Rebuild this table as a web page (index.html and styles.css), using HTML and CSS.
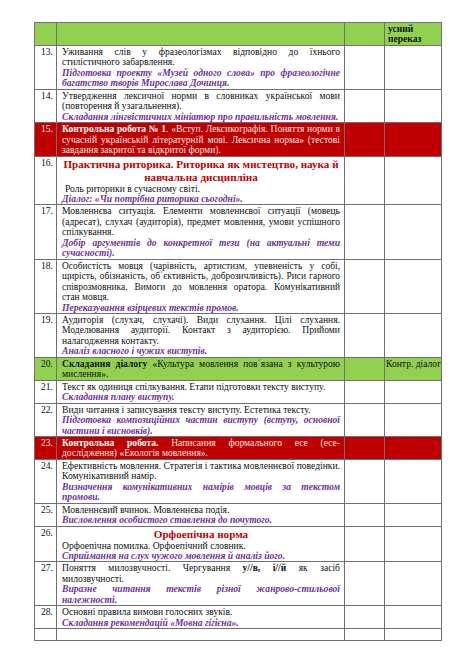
FILE: index.html
```html
<!DOCTYPE html>
<html lang="uk">
<head>
<meta charset="utf-8">
<title>Календарний план</title>
<link rel="stylesheet" href="styles.css">
</head>
<body>
<table class="plan">
  <colgroup>
    <col class="c-num">
    <col class="c-topic">
    <col class="c-hours">
    <col class="c-note">
  </colgroup>
  <tr class="row-green head">
    <td></td><td></td><td></td><td class="note bold">усний переказ</td>
  </tr>
  <tr>
    <td class="num">13.</td>
    <td class="topic"><p>Уживання слів у фразеологізмах відповідно до їхнього стилістичного забарвлення.</p><p class="task">Підготовка проекту «Музей одного слова» про фразеологічне багатство творів Мирослава Дочинця.</p></td>
    <td></td><td></td>
  </tr>
  <tr>
    <td class="num">14.</td>
    <td class="topic"><p>Утвердження лексичної норми в словниках української мови (повторення й узагальнення).</p><p class="task">Складання лінгвістичних мініатюр про правильність мовлення.</p></td>
    <td></td><td></td>
  </tr>
  <tr class="row-red">
    <td class="num">15.</td>
    <td class="topic"><p><b>Контрольна робота № 1</b>. «Вступ. Лексикографія. Поняття норми в сучасній українській літературній мові. Лексична норма» (тестові завдання закритої та відкритої форми).</p></td>
    <td></td><td></td>
  </tr>
  <tr>
    <td class="num">16.</td>
    <td class="topic"><p class="heading">Практична риторика. Риторика як мистецтво, наука й навчальна дисципліна</p><p class="indent">Роль риторики в сучасному світі.</p><p class="task">Діалог: «Чи потрібна риторика сьогодні».</p></td>
    <td></td><td></td>
  </tr>
  <tr>
    <td class="num">17.</td>
    <td class="topic"><p>Мовленнєва ситуація. Елементи мовленнєвої ситуації (мовець (адресат), слухач (аудиторія), предмет мовлення, умови успішного спілкування.</p><p class="task">Добір аргументів до конкретної тези (на актуальні теми сучасності).</p></td>
    <td></td><td></td>
  </tr>
  <tr>
    <td class="num">18.</td>
    <td class="topic"><p class="dense">Особистість мовця (чарівність, артистизм, упевненість у собі, щирість, обізнаність, об΄єктивність, доброзичливість). Риси гарного співрозмовника. Вимоги до мовлення оратора. Комунікативний стан&nbsp;мовця.</p><p class="task">Переказування взірцевих текстів промов.</p></td>
    <td></td><td></td>
  </tr>
  <tr>
    <td class="num">19.</td>
    <td class="topic"><p>Аудиторія (слухач, слухачі). Види слухання. Цілі слухання. Моделювання аудиторії. Контакт з аудиторією. Прийоми налагодження контакту.</p><p class="task">Аналіз власного і чужих виступів.</p></td>
    <td></td><td></td>
  </tr>
  <tr class="row-green">
    <td class="num">20.</td>
    <td class="topic"><p><b>Складання діалогу</b> «Культура мовлення пов΄язана з культурою мислення».</p></td>
    <td></td><td class="note tight">Контр. діалог</td>
  </tr>
  <tr>
    <td class="num">21.</td>
    <td class="topic"><p>Текст як одиниця спілкування. Етапи підготовки тексту виступу.</p><p class="task">Складання плану виступу.</p></td>
    <td></td><td></td>
  </tr>
  <tr>
    <td class="num">22.</td>
    <td class="topic"><p>Види читання і записування тексту виступу. Естетика тексту.</p><p class="task">Підготовка композиційних частин виступу (вступу, основної частини і висновків).</p></td>
    <td></td><td></td>
  </tr>
  <tr class="row-red">
    <td class="num">23.</td>
    <td class="topic"><p><b>Контрольна робота.</b> Написання формального есе (есе-дослідження) «Екологія мовлення».</p></td>
    <td></td><td></td>
  </tr>
  <tr>
    <td class="num">24.</td>
    <td class="topic"><p>Ефективність мовлення. Стратегія і тактика мовленнєвої поведінки. Комунікативний намір.</p><p class="task">Визначення комунікативних намірів мовців за текстом промови.</p></td>
    <td></td><td></td>
  </tr>
  <tr>
    <td class="num">25.</td>
    <td class="topic"><p>Мовленнєвий вчинок. Мовленнєва подія.</p><p class="task">Висловлення особистого ставлення до почутого.</p></td>
    <td></td><td></td>
  </tr>
  <tr>
    <td class="num">26.</td>
    <td class="topic"><p class="heading">Орфоепічна норма</p><p>Орфоепічна помилка. Орфоепічний словник.</p><p class="task">Сприймання на слух чужого мовлення й аналіз його.</p></td>
    <td></td><td></td>
  </tr>
  <tr>
    <td class="num">27.</td>
    <td class="topic"><p>Поняття милозвучності. Чергування <b>у//в, і//й</b> як засіб милозвучності.</p><p class="task">Виразне читання текстів різної жанрово-стильової належності.</p></td>
    <td></td><td></td>
  </tr>
  <tr>
    <td class="num">28.</td>
    <td class="topic"><p>Основні правила вимови голосних звуків.</p><p class="task">Складання рекомендацій «Мовна гігієна».</p></td>
    <td></td><td></td>
  </tr>
  <tr class="empty">
    <td></td><td></td><td></td><td></td>
  </tr>
</table>
</body>
</html>
```
FILE: styles.css
```css
html, body {
  margin: 0;
  padding: 0;
  background: #ffffff;
}

body {
  font-family: "Liberation Serif", "Times New Roman", "DejaVu Serif", serif;
  font-size: 9.58px;
  line-height: 10.45px;
  color: #111111;
}

.plan {
  margin: 22px 0 0 34px;
  width: 407px;
  border-collapse: collapse;
  table-layout: fixed;
}

.c-num { width: 22px; }
.c-topic { width: 288px; }
.c-hours { width: 40px; }
.c-note { width: 57px; }

.plan td {
  border: 1px solid #707070;
  vertical-align: top;
  padding: 1px 2px 0 2px;
}

.plan td.num {
  padding-left: 6px;
  padding-right: 0;
}

.plan td.topic {
  padding: 1px 4px 0 5px;
  text-align: justify;
}

.plan td.note {
  padding-left: 3px;
  padding-right: 0;
}

.plan td.tight {
  padding-left: 1px;
  white-space: nowrap;
  overflow: hidden;
}

.plan p {
  margin: 0;
}

.dense {
  font-size: 9.45px;
}

.head td {
  height: 21px;
}

.bold {
  font-weight: bold;
}

.task {
  color: #7030a0;
  font-style: italic;
  font-weight: bold;
  font-size: 9.6px;
}

.heading {
  color: #c00000;
  font-weight: bold;
  font-size: 11.1px;
  line-height: 13px;
  text-align: center;
}

.indent {
  padding-left: 3px;
}

.row-green td {
  background: #92d050;
}

.row-red td {
  background: #c00000;
  color: #f7e4e4;
}

.row-red b {
  color: #ffffff;
}

.empty td {
  height: 10px;
}
```
